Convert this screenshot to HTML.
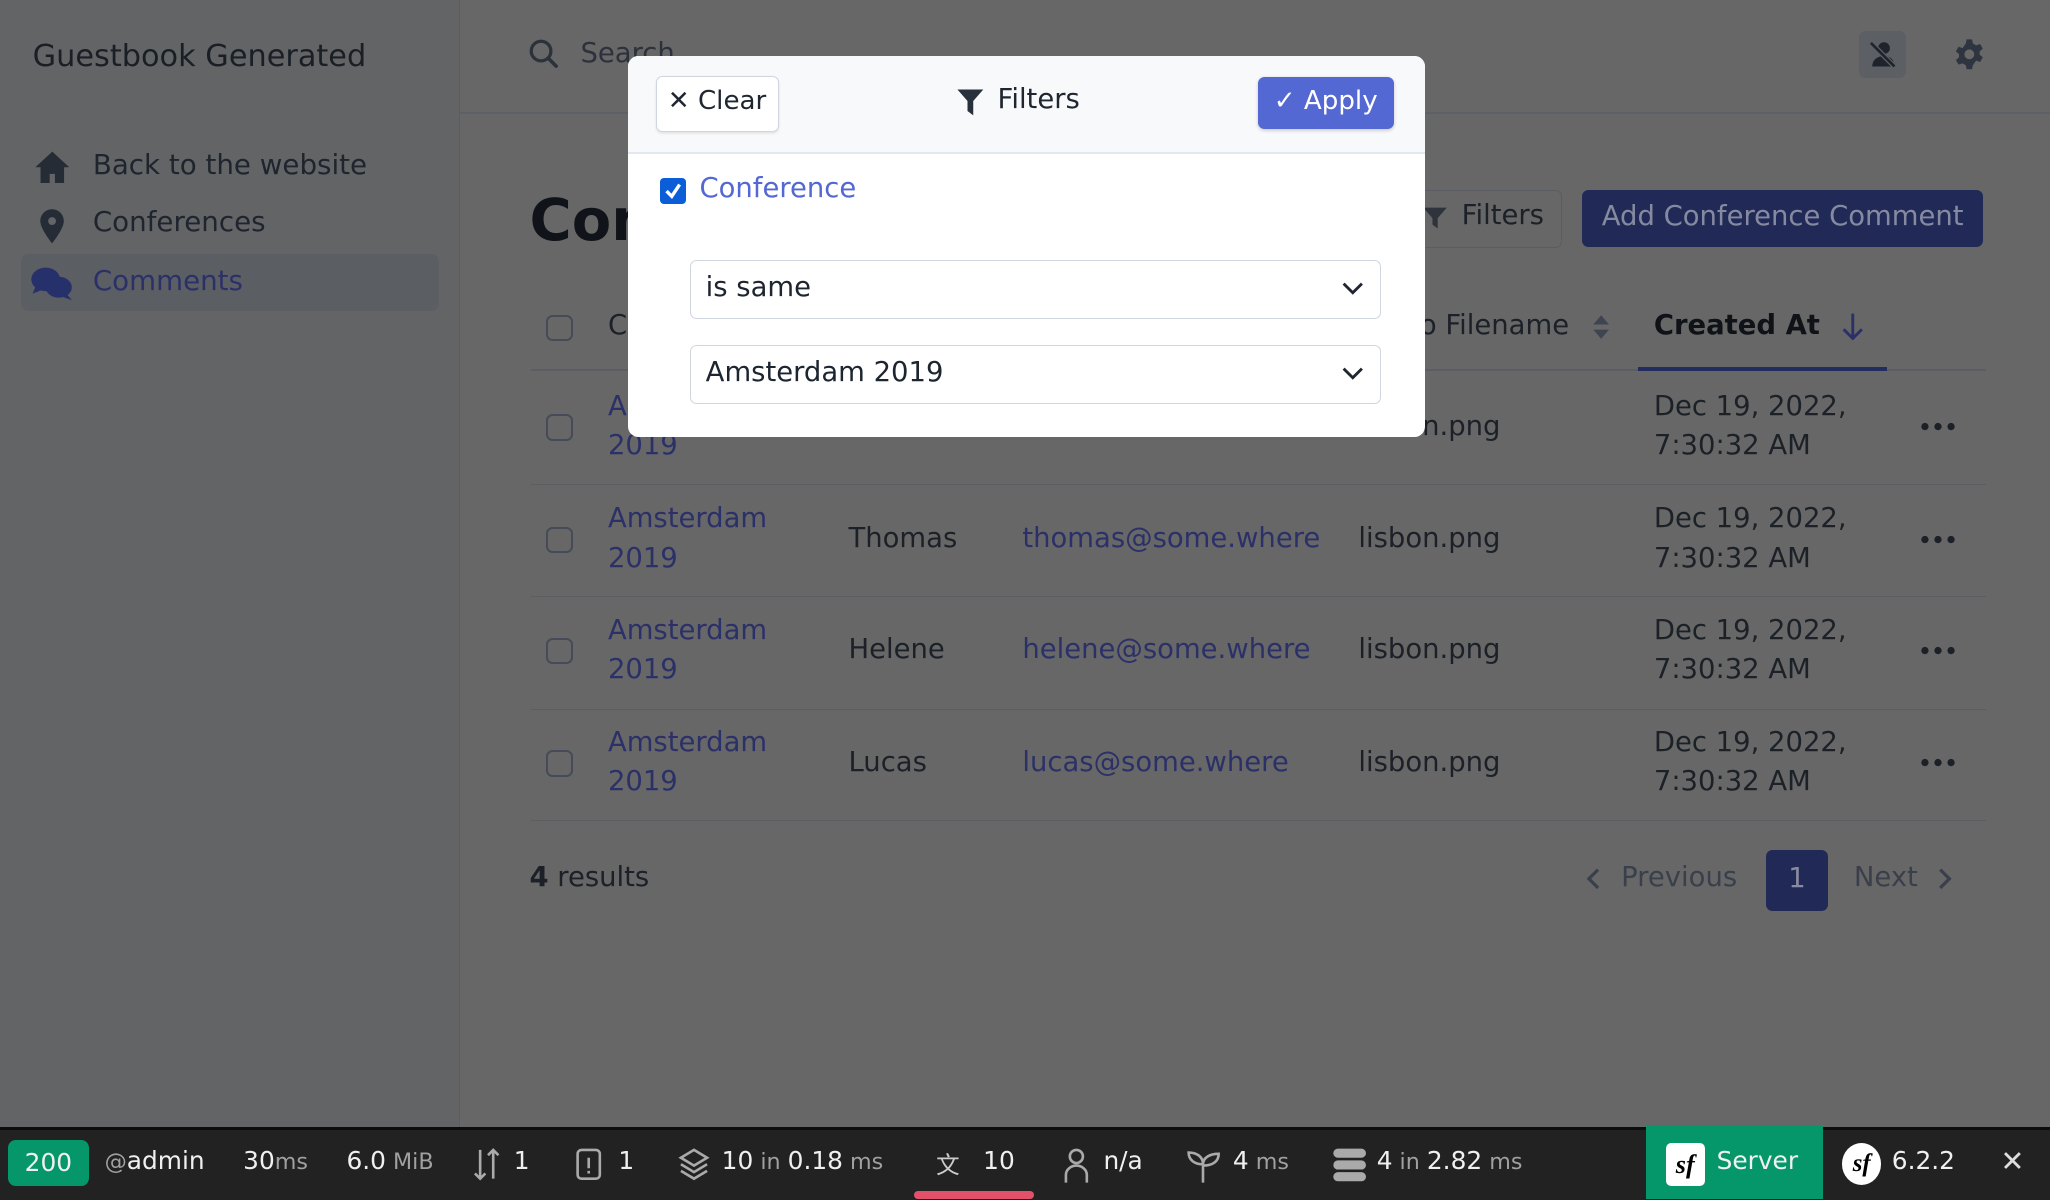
<!DOCTYPE html>
<html><head><meta charset="utf-8"><style>
html,body{margin:0;padding:0;width:2050px;height:1200px;overflow:hidden;background:#676767}
#w{position:absolute;left:0;top:0;width:1568px;height:918px;zoom:1.30740;font-family:"DejaVu Sans","Liberation Sans",sans-serif;color:#1c2128}
.a{position:absolute;white-space:nowrap}
#side{left:0;top:0;width:351px;height:862px;background:#636466;border-right:1px solid #5b5f64}
.nav{font-size:21.2px;color:#1f252e}
.lnk{color:#2b3168}
.cb{position:absolute;width:20px;height:20px;border:2px solid #454b57;border-radius:5px;box-sizing:border-box}
.row{position:absolute;left:406px;width:1113px;height:1px;background:#5a5d62}
.td{font-size:21px;line-height:30px}
.dots{position:absolute;left:1469px}
#bar{left:0;top:862px;width:1568px;height:56px;background:#222;border-top:3px solid #0d0d0d;box-sizing:border-box;color:#f0f0f0;font-size:19px}
.g{color:#a0a0a0;font-size:17px}
#modal{left:480px;top:43px;width:610px;height:291px;background:#fff;border-radius:8px;overflow:hidden}
.sel{position:absolute;left:48px;width:528px;height:45px;border:1px solid #cfd6e0;border-radius:5px;box-sizing:border-box;font-size:21px;line-height:41px;padding-left:11px;color:#1c2530}
</style></head><body><div id="w">
<div class="a" id="side"></div>
<div class="a" style="left:25px;top:30px;font-size:23.2px;color:#1a1f26">Guestbook Generated</div>
<div class="a" style="left:16px;top:194px;width:320px;height:44px;background:#5b5e62;border-radius:6px"></div>
<svg class="a" style="left:26px;top:114px" width="28" height="28" viewBox="0 0 28 28"><path d="M14 2L1 14h4v12h7v-7h4v7h7V14h4z" fill="#262c36"/></svg>
<svg class="a" style="left:30px;top:159px" width="20" height="28" viewBox="0 0 20 28"><path d="M10 1C5 1 1 5 1 10c0 6 9 17 9 17s9-11 9-17c0-5-4-9-9-9zm0 12a3 3 0 110-6 3 3 0 010 6z" fill="#262c36"/></svg>
<svg class="a" style="left:23px;top:203px" width="34" height="28" viewBox="0 0 34 28"><ellipse cx="12" cy="11" rx="11" ry="9" fill="#26306a"/><path d="M4 17l-2 5 7-3z" fill="#26306a"/><ellipse cx="22" cy="17" rx="10" ry="8" fill="#26306a"/><path d="M28 22l4 5-8-3z" fill="#26306a"/></svg>
<div class="a nav" style="left:71px;top:113px">Back to the website</div>
<div class="a nav" style="left:71px;top:157px">Conferences</div>
<div class="a nav" style="left:71px;top:202px;color:#2b3168">Comments</div>
<div class="a" style="left:352px;top:86px;width:1216px;height:1px;background:#5d6065"></div>
<svg class="a" style="left:404px;top:29px" width="24" height="24" viewBox="0 0 24 24"><circle cx="10" cy="10" r="7.5" fill="none" stroke="#2c323b" stroke-width="2.5"/><path d="M15.5 15.5l6 6" stroke="#2c323b" stroke-width="2.8" stroke-linecap="round"/></svg>
<div class="a" style="left:444px;top:29px;font-size:21px;color:#2c323b">Search</div>
<div class="a" style="left:1422px;top:24px;width:36px;height:36px;background:#5c5f63;border-radius:5px"></div>
<svg class="a" style="left:1428px;top:30px" width="24" height="24" viewBox="0 0 24 24"><circle cx="13" cy="7" r="4.5" fill="#1e232c"/><path d="M4 21c0-5 4-8 9-8s8 3 8 8z" fill="#1e232c"/><path d="M3 3l18 18" stroke="#5c5f63" stroke-width="4"/><path d="M3 3l18 18" stroke="#1e232c" stroke-width="2"/></svg>
<svg class="a" style="left:1494px;top:29px" width="25" height="25" viewBox="0 0 24 24"><path d="M10 1h4l.6 3 2.4 1.4 2.9-1 2 3.4-2.3 2v2.4l2.3 2-2 3.4-2.9-1L14.6 20 14 23h-4l-.6-3L7 18.6l-2.9 1-2-3.4 2.3-2v-2.4l-2.3-2 2-3.4 2.9 1L9.4 4z" fill="#2f3540"/><circle cx="12" cy="12" r="3.6" fill="#676767"/></svg>
<div class="a" style="left:405px;top:143px;font-size:44px;font-weight:bold;color:#10141a">Comments</div>
<div class="a" style="left:1060px;top:145px;width:135px;height:45px;border:1px solid #595d63;border-radius:5px;box-sizing:border-box"></div>
<svg class="a" style="left:1088px;top:157px" width="20" height="20" viewBox="0 0 20 20"><path d="M1 2h18l-7 8v8l-4-3v-5z" fill="#2f343c"/></svg>
<div class="a" style="left:1118px;top:153px;font-size:21px;color:#1c2128">Filters</div>
<div class="a" style="left:1210px;top:145px;width:307px;height:44px;background:#212a57;border-radius:5px;font-size:21px;line-height:42px;text-align:center;color:#868aa0">Add Conference Comment</div>
<div class="cb" style="left:418px;top:241px"></div>
<div class="a" style="left:465px;top:237px;font-size:21px">Conference</div>
<div class="a" style="left:1039px;top:237px;font-size:21px">Photo Filename</div>
<svg class="a" style="left:1218px;top:240px" width="14" height="20" viewBox="0 0 14 20"><path d="M7 1l6 7H1zM7 19l6-7H1z" fill="#3e4450"/></svg>
<div class="a" style="left:1265px;top:237px;font-size:21px;font-weight:bold;color:#0f1318">Created At</div>
<svg class="a" style="left:1408px;top:238px" width="18" height="24" viewBox="0 0 18 24"><path d="M9 2v19M2 14l7 7 7-7" fill="none" stroke="#2b3168" stroke-width="2.2"/></svg>
<div class="row" style="top:282px;height:2px"></div>
<div class="a" style="left:1253px;top:281px;width:190px;height:3px;background:#232c5e"></div>
<div class="row" style="top:370px"></div><div class="row" style="top:456px"></div><div class="row" style="top:542px"></div><div class="row" style="top:627px"></div>
<div class="cb" style="left:418px;top:317px"></div><div class="cb" style="left:418px;top:403px"></div><div class="cb" style="left:418px;top:488px"></div><div class="cb" style="left:418px;top:574px"></div>
<div class="a td lnk" style="left:465px;top:296px">Amsterdam<br>2019</div>
<div class="a td" style="left:1039px;top:311px">lisbon.png</div>
<div class="a td" style="left:1265px;top:296px">Dec 19, 2022,<br>7:30:32 AM</div>
<div class="a td lnk" style="left:465px;top:382px">Amsterdam<br>2019</div>
<div class="a td" style="left:649px;top:397px">Thomas</div>
<div class="a td lnk" style="left:782px;top:397px">thomas@some.where</div>
<div class="a td" style="left:1039px;top:397px">lisbon.png</div>
<div class="a td" style="left:1265px;top:382px">Dec 19, 2022,<br>7:30:32 AM</div>
<div class="a td lnk" style="left:465px;top:467px">Amsterdam<br>2019</div>
<div class="a td" style="left:649px;top:482px">Helene</div>
<div class="a td lnk" style="left:782px;top:482px">helene@some.where</div>
<div class="a td" style="left:1039px;top:482px">lisbon.png</div>
<div class="a td" style="left:1265px;top:467px">Dec 19, 2022,<br>7:30:32 AM</div>
<div class="a td lnk" style="left:465px;top:553px">Amsterdam<br>2019</div>
<div class="a td" style="left:649px;top:568px">Lucas</div>
<div class="a td lnk" style="left:782px;top:568px">lucas@some.where</div>
<div class="a td" style="left:1039px;top:568px">lisbon.png</div>
<div class="a td" style="left:1265px;top:553px">Dec 19, 2022,<br>7:30:32 AM</div>
<svg class="dots" style="top:323px" width="26" height="7" viewBox="0 0 26 7"><circle cx="3" cy="3.5" r="2.8" fill="#1c2128"/><circle cx="13" cy="3.5" r="2.8" fill="#1c2128"/><circle cx="23" cy="3.5" r="2.8" fill="#1c2128"/></svg>
<svg class="dots" style="top:409px" width="26" height="7" viewBox="0 0 26 7"><circle cx="3" cy="3.5" r="2.8" fill="#1c2128"/><circle cx="13" cy="3.5" r="2.8" fill="#1c2128"/><circle cx="23" cy="3.5" r="2.8" fill="#1c2128"/></svg>
<svg class="dots" style="top:494px" width="26" height="7" viewBox="0 0 26 7"><circle cx="3" cy="3.5" r="2.8" fill="#1c2128"/><circle cx="13" cy="3.5" r="2.8" fill="#1c2128"/><circle cx="23" cy="3.5" r="2.8" fill="#1c2128"/></svg>
<svg class="dots" style="top:580px" width="26" height="7" viewBox="0 0 26 7"><circle cx="3" cy="3.5" r="2.8" fill="#1c2128"/><circle cx="13" cy="3.5" r="2.8" fill="#1c2128"/><circle cx="23" cy="3.5" r="2.8" fill="#1c2128"/></svg>
<div class="a" style="left:405px;top:659px;font-size:21px"><b>4</b> results</div>
<svg class="a" style="left:1212px;top:663px" width="14" height="18" viewBox="0 0 14 18"><path d="M10 2L3 9l7 7" fill="none" stroke="#3a404b" stroke-width="2.5"/></svg>
<div class="a" style="left:1240px;top:659px;font-size:21px;color:#3a404b">Previous</div>
<div class="a" style="left:1351px;top:650px;width:47px;height:47px;background:#212a57;border-radius:5px;font-size:21px;line-height:45px;text-align:center;color:#878aa0">1</div>
<div class="a" style="left:1418px;top:659px;font-size:21px;color:#3a404b">Next</div>
<svg class="a" style="left:1480px;top:663px" width="14" height="18" viewBox="0 0 14 18"><path d="M4 2l7 7-7 7" fill="none" stroke="#3a404b" stroke-width="2.5"/></svg>
<div class="a" id="modal">
 <div class="a" style="left:0;top:0;width:610px;height:73px;background:#f8f9fb;border-bottom:2px solid #e3e8ee"></div>
 <div class="a" style="left:22px;top:15px;width:94px;height:43px;background:#fff;border:1px solid #cfd6e0;border-radius:5px;box-sizing:border-box;box-shadow:0 1px 2px rgba(0,0,0,.1);font-size:20px;line-height:38px;padding-left:8px;color:#1f2630">✕ Clear</div>
 <svg class="a" style="left:251px;top:24px" width="22" height="22" viewBox="0 0 20 20"><path d="M1 1h18l-7 8v10l-4-3v-7z" fill="#27303b"/></svg>
 <div class="a" style="left:283px;top:21px;font-size:21px;color:#1f2630">Filters</div>
 <div class="a" style="left:482px;top:16px;width:104px;height:40px;background:#5468d4;border-radius:5px;box-shadow:0 1px 3px rgba(0,0,0,.2);font-size:20px;line-height:38px;text-align:center;color:#fff">✓ Apply</div>
 <div class="a" style="left:25px;top:93px;width:20px;height:20px;background:#0b5ed7;border-radius:3px"></div>
 <svg class="a" style="left:25px;top:93px" width="20" height="20" viewBox="0 0 20 20"><path d="M5 10l4 4 6-9" fill="none" stroke="#fff" stroke-width="2.6"/></svg>
 <div class="a" style="left:55px;top:89px;font-size:21px;color:#5468d4">Conference</div>
 <div class="sel" style="top:156px">is same</div>
 <div class="sel" style="top:221px">Amsterdam 2019</div>
 <svg class="a" style="left:546px;top:172px" width="18" height="12" viewBox="0 0 18 12"><path d="M2 2l7 7 7-7" fill="none" stroke="#1f2630" stroke-width="2.2"/></svg>
 <svg class="a" style="left:546px;top:237px" width="18" height="12" viewBox="0 0 18 12"><path d="M2 2l7 7 7-7" fill="none" stroke="#1f2630" stroke-width="2.2"/></svg>
</div>
<div class="a" id="bar">
 <div class="a" style="left:6px;top:8px;width:62px;height:35px;background:#059669;border-radius:6px;text-align:center;line-height:35px">200</div>
 <div class="a" style="left:80px;top:12px"><span class="g">@</span>admin</div>
 <div class="a" style="left:186px;top:12px">30<span class="g">ms</span></div>
 <div class="a" style="left:265px;top:12px">6.0<span class="g"> MiB</span></div>
 <svg class="a" style="left:360px;top:12px" width="24" height="28" viewBox="0 0 24 28"><path d="M7 3v22M3 21l4 4 4-4M17 25V3M13 7l4-4 4 4" fill="none" stroke="#aaa" stroke-width="2"/></svg>
 <div class="a" style="left:393px;top:12px">1</div>
 <svg class="a" style="left:440px;top:12px" width="22" height="28" viewBox="0 0 22 28"><rect x="2" y="3" width="17" height="22" rx="3" fill="none" stroke="#aaa" stroke-width="2"/><path d="M10.5 9v8M10.5 19v2" stroke="#aaa" stroke-width="2"/></svg>
 <div class="a" style="left:473px;top:12px">1</div>
 <svg class="a" style="left:518px;top:12px" width="26" height="28" viewBox="0 0 26 28"><path d="M13 3l10 6-10 6-10-6zM3 14l10 6 10-6M3 19l10 6 10-6" fill="none" stroke="#aaa" stroke-width="2"/></svg>
 <div class="a" style="left:552px;top:12px">10<span class="g"> in </span>0.18<span class="g"> ms</span></div>
 <div class="a" style="left:716px;top:12px;color:#ccc;font-size:18px">⽂</div>
 <div class="a" style="left:752px;top:12px">10</div>
 <div class="a" style="left:699px;top:47px;width:92px;height:6px;background:#e25069;border-radius:3px"></div>
 <svg class="a" style="left:812px;top:12px" width="22" height="30" viewBox="0 0 22 30"><circle cx="11" cy="8" r="5" fill="none" stroke="#aaa" stroke-width="2"/><path d="M3 28v-6c0-4 4-7 8-7s8 3 8 7v6" fill="none" stroke="#aaa" stroke-width="2"/></svg>
 <div class="a" style="left:844px;top:12px">n/a</div>
 <svg class="a" style="left:907px;top:12px" width="28" height="30" viewBox="0 0 28 30"><path d="M13 28V14C13 8 8 5 2 5c0 6 5 9 11 9M13 14c0-5 5-8 12-8 0 6-5 9-12 9" fill="none" stroke="#aaa" stroke-width="2"/></svg>
 <div class="a" style="left:943px;top:12px">4<span class="g"> ms</span></div>
 <svg class="a" style="left:1019px;top:12px" width="28" height="30" viewBox="0 0 28 30"><rect x="1" y="2" width="25" height="7" rx="3.5" fill="#aaa"/><rect x="1" y="11" width="25" height="7" rx="3.5" fill="#aaa"/><rect x="1" y="20" width="25" height="7" rx="3.5" fill="#aaa"/></svg>
 <div class="a" style="left:1053px;top:12px">4<span class="g"> in </span>2.82<span class="g"> ms</span></div>
 <div class="a" style="left:1259px;top:-3px;width:135px;height:56px;background:#059669"></div>
 <div class="a" style="left:1274px;top:10px;width:30px;height:33px;background:#fff;border-radius:4px;color:#000;font:italic bold 20px 'Liberation Serif',serif;text-align:center;line-height:33px">sf</div>
 <div class="a" style="left:1313px;top:12px">Server</div>
 <div class="a" style="left:1409px;top:10px;width:30px;height:32px;background:#fff;border-radius:50%;color:#000;font:italic bold 19px 'Liberation Serif',serif;text-align:center;line-height:32px">sf</div>
 <div class="a" style="left:1447px;top:12px">6.2.2</div>
 <div class="a" style="left:1530px;top:11px;font-size:22px;color:#ddd">✕</div>
</div>
</div></body></html>
